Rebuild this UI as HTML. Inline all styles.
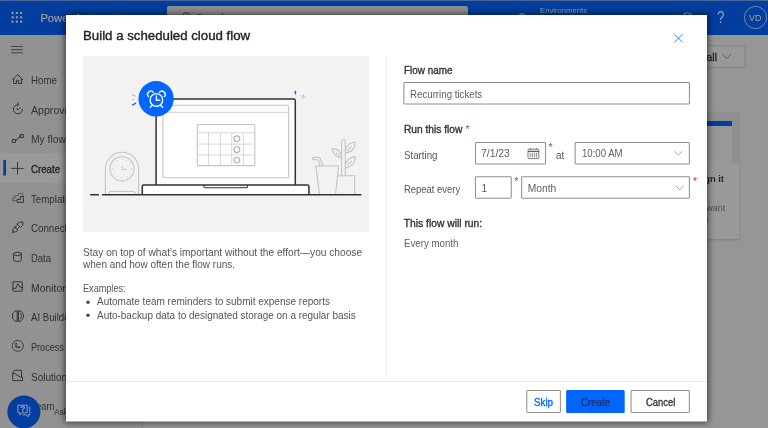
<!DOCTYPE html>
<html lang="en">
<head>
<meta charset="utf-8">
<title>Build a scheduled cloud flow</title>
<style>
*{box-sizing:border-box;margin:0;padding:0}
html,body{width:768px;height:428px;overflow:hidden}
body{position:relative;background:#969696;font-family:"Liberation Sans",sans-serif;color:#323130;font-size:10px}
.abs{position:absolute}
.t{position:absolute;white-space:pre;transform-origin:0 50%}
svg{position:absolute;left:0;top:0;overflow:visible}
#root{position:absolute;left:0;top:0;width:768px;height:428px;will-change:transform}
#dialog{left:66.1px;top:15.3px;width:641px;height:406.1px;background:#fff;box-shadow:0 0 7px 1px rgba(0,0,0,.58),0 2px 6px rgba(0,0,0,.12)}
</style>
</head>
<body>
<div id="root">

<div class="abs" style="left:0;top:0;width:768px;height:34.6px;background:#033d9e;border-top:1px solid #4a6498"></div>
<div class="abs" style="left:0;top:34.6px;width:142.6px;height:394px;background:#929292"></div>
<div class="abs" style="left:142px;top:34.6px;width:1px;height:394px;background:#878787"></div>
<div class="abs" style="left:0;top:153.4px;width:142.6px;height:29.6px;background:#999"></div>
<div class="abs" style="left:166.8px;top:5.8px;width:301px;height:22.6px;background:#8f8f8f;border-radius:2px"></div>
<div class="abs" style="left:560px;top:111.5px;width:179.4px;height:127.5px;background:#999;box-shadow:0 1px 2px rgba(0,0,0,.18)"></div>
<div class="abs" style="left:560px;top:111.5px;width:179.4px;height:51.4px;background:#8f8f8f"></div>
<div class="abs" style="left:560px;top:121px;width:172.1px;height:41.9px;background:#989898"></div>
<div class="abs" style="left:560px;top:121px;width:172.1px;height:4.8px;background:#033d9e"></div>
<svg width="768" height="428" viewBox="0 0 768 428" fill="none">
<rect x="11.60" y="11.90" width="2" height="2" fill="#a3a3a3"/><rect x="15.85" y="11.90" width="2" height="2" fill="#a3a3a3"/><rect x="20.10" y="11.90" width="2" height="2" fill="#a3a3a3"/><rect x="11.60" y="16.30" width="2" height="2" fill="#a3a3a3"/><rect x="15.85" y="16.30" width="2" height="2" fill="#a3a3a3"/><rect x="20.10" y="16.30" width="2" height="2" fill="#a3a3a3"/><rect x="11.60" y="20.70" width="2" height="2" fill="#a3a3a3"/><rect x="15.85" y="20.70" width="2" height="2" fill="#a3a3a3"/><rect x="20.10" y="20.70" width="2" height="2" fill="#a3a3a3"/>
<path d="M11.1 46.5 H22.9 M11.1 49.7 H22.9 M11.1 52.8 H22.9" stroke="#3a3a3a" stroke-width="0.9"/>
<g stroke="#3a3a3a" stroke-width="1"><circle cx="186.2" cy="15.8" r="3.2"/><path d="M183.9 18.1 L181.2 20.8"/></g>
<g stroke="#9a9a9a" stroke-width="0.9"><circle cx="522" cy="18.6" r="5"/><ellipse cx="522" cy="18.6" rx="2.2" ry="5"/></g>
<g stroke="#a0a0a0" stroke-width="1"><path d="M687.5 12.2 L688.7 13.8 L690.9 13.2 L691.3 15.3 L693.3 16.2 L692.3 18 L693.3 19.8 L691.3 20.7 L690.9 22.8 L688.7 22.2 L687.5 23.8 L686.3 22.2 L684.1 22.8 L683.7 20.7 L681.7 19.8 L682.7 18 L681.7 16.2 L683.7 15.3 L684.1 13.2 L686.3 13.8 Z"/></g>
<circle cx="755.5" cy="17.5" r="11.1" stroke="#a0a0a0" stroke-width="0.75"/>
<rect x="3.3" y="159.7" width="2.7" height="16" rx="1.3" fill="#033d9e"/>
<rect x="640" y="45.9" width="105.2" height="21.8" rx="1.5" fill="#989898" stroke="#808080" stroke-width="1"/>
<path d="M722.7 54.5 L726.65 58.6 L730.6 54.5" stroke="#4f4f4f" stroke-width="0.8"/>
<g stroke="#2f2f2f" stroke-width="0.95" stroke-linejoin="round" stroke-linecap="round">
<path d="M12.7 79.6 L17.6 74.6 L22.6 79.6 M13.7 78.9 V83.5 H16.6 V80.3 H18.7 V83.5 H21.6 V78.9"/>
<path d="M18 104.6 A4.6 4.6 0 1 0 22.6 109.2"/><path d="M17.3 103 L19 104.6 L17.3 106.2"/><path d="M16.6 108.8 L18 109.9 L20.3 107.6"/>
<rect x="12.6" y="139.5" width="2.9" height="2.9"/><rect x="20.5" y="134.6" width="2.9" height="2.9"/><path d="M15.5 140.9 C18 140.9 18 136 20.5 136"/>
<path d="M17.5 162.6 V174.2 M11.7 168.4 H23.3" stroke-width="0.9"/>
<path d="M17.4 199.5 H20.3 V196.5 H23.4 V202.4 H17.4 Z"/><path d="M17.2 200.6 H12.4 V198.1 H15 V195.8 H18.2 V193.4 H22.7 V196.3" stroke="#555"/>
<path d="M12.9 232 L12 232.9"/><path d="M15 226.9 L17.6 230.1 Q16.4 232.9 12.9 232 Q11.9 228.6 15 226.9 Z"/><path d="M16.6 226.2 L15.8 227 M18.4 228 L17.6 228.8"/><path d="M17.1 224.2 L20.5 227.5 Q23.6 226 23 222 Q19 221.2 17.1 224.2 Z"/>
<path d="M13.5 254 Q13.5 252.2 17.4 252.2 Q21.3 252.2 21.3 254 V259.8 Q21.3 261.6 17.4 261.6 Q13.5 261.6 13.5 259.8 Z"/><path d="M13.5 254 Q13.5 255.6 17.4 255.6 Q21.3 255.6 21.3 254"/>
<rect x="12.9" y="281.8" width="9.4" height="9.4" rx="0.5"/><path d="M12.9 288.3 H15.8 L17.9 283.8 L20.4 287.6 H22.3"/>
<path d="M16.8 310.7 Q14.4 310.3 13.7 312.5 Q11.9 313.6 12.6 316 Q11.8 318.4 13.6 319.7 Q14.4 321.9 16.8 321.5 Z"/><path d="M18.8 310.7 Q21.2 310.3 21.9 312.5 Q23.4 313.2 23.1 315 L23.8 316 L23.1 317.2 Q23.4 318.8 21.9 319.7 Q21.2 321.9 18.8 321.5 Z"/><path d="M20.2 313.2 Q22 313.8 21.6 315.4 M20.4 318.6 Q20 316.8 21.8 316.6" stroke-width="0.8"/>
<circle cx="17.8" cy="345.9" r="5.5" stroke-width="0.8" stroke-dasharray="7.6 1.04" stroke-dashoffset="-0.5"/><path d="M16 343.8 V347.2 H18.8" stroke-width="1.1"/><circle cx="16" cy="343.6" r="0.8" fill="#2f2f2f" stroke="none"/><circle cx="19.2" cy="347.2" r="0.95" fill="#2f2f2f" stroke="none"/>
<path d="M12.8 373.5 V380.6 H22.5 V377.1 H21.5 V370.3 H14.3 L12.8 373.5 Z"/><path d="M12.8 373.5 H14.6 L20.3 377.1 H21.5"/>
</g>
</svg>

<div class="t" style="left:40.40px;top:10.92px;font-size:11.2px;line-height:14.6px;color:#a0a0a0;-webkit-text-stroke:0.15px #a0a0a0;">Power Automate</div>
<div class="t" style="left:196.00px;top:11.05px;font-size:9.8px;line-height:12.7px;color:#3c3c3c;">Search</div>
<div class="t" style="left:539.80px;top:5.53px;font-size:8px;line-height:10.4px;color:#8ea3c9;transform:scaleX(0.9609);">Environments</div>
<div class="t" style="left:539.80px;top:14.85px;font-size:9.8px;line-height:12.7px;color:#a0a0a0;">Contoso (default)</div>
<div class="t" style="left:717.20px;top:7.74px;font-size:15.9px;line-height:20.7px;color:#8fa0c8;transform:scaleX(0.8367);">?</div>
<div class="t" style="left:749.20px;top:12.65px;font-size:9.1px;line-height:11.8px;color:#a6a6a6;transform:scaleX(0.9729);">VD</div>
<div class="t" style="left:31.10px;top:73.95px;font-size:10.4px;line-height:13.5px;color:#303030;transform:scaleX(0.935);">Home</div>
<div class="t" style="left:31.10px;top:103.61px;font-size:10.4px;line-height:13.5px;color:#303030;transform:scaleX(1.020);">Approvals</div>
<div class="t" style="left:31.10px;top:133.27px;font-size:10.4px;line-height:13.5px;color:#303030;transform:scaleX(0.990);">My flows</div>
<div class="t" style="left:31.10px;top:162.93px;font-size:10.4px;line-height:13.5px;color:#1f1f1f;-webkit-text-stroke:0.3px #1f1f1f;transform:scaleX(0.930);">Create</div>
<div class="t" style="left:31.10px;top:192.59px;font-size:10.4px;line-height:13.5px;color:#303030;transform:scaleX(0.935);">Templates</div>
<div class="t" style="left:31.10px;top:222.25px;font-size:10.4px;line-height:13.5px;color:#303030;transform:scaleX(0.935);">Connectors</div>
<div class="t" style="left:31.10px;top:251.91px;font-size:10.4px;line-height:13.5px;color:#303030;transform:scaleX(0.910);">Data</div>
<div class="t" style="left:31.10px;top:281.57px;font-size:10.4px;line-height:13.5px;color:#303030;transform:scaleX(1.000);">Monitor</div>
<div class="t" style="left:31.10px;top:311.23px;font-size:10.4px;line-height:13.5px;color:#303030;transform:scaleX(0.926);">AI Builder</div>
<div class="t" style="left:31.10px;top:340.89px;font-size:10.4px;line-height:13.5px;color:#303030;transform:scaleX(0.875);">Process mining</div>
<div class="t" style="left:31.10px;top:370.55px;font-size:10.4px;line-height:13.5px;color:#303030;transform:scaleX(0.960);">Solutions</div>
<div class="t" style="left:31.10px;top:400.21px;font-size:10.4px;line-height:13.5px;color:#303030;transform:scaleX(0.890);">Learn</div>
<div class="t" style="left:54.20px;top:407.32px;font-size:8.3px;line-height:10.8px;color:#303030;">Ask a chatbot</div>
<svg width="768" height="428" viewBox="0 0 768 428" fill="none">
<circle cx="23.9" cy="411.9" r="16.5" fill="#033d9e"/>
<g stroke="#9aa9c8" stroke-width="0.9" stroke-linejoin="round"><path d="M17.9 405.2 H27.2 V412.8 H22 L20 415.2 V412.8 H17.9 Z"/><path d="M28.6 407.2 H29.8 V414.8 H28.2 V416.8 L26 414.8 H22.6"/></g>
</svg>

<div class="t" style="left:20.30px;top:403.64px;font-size:8.4px;line-height:10.9px;color:#9aa9c8;font-weight:bold;">?</div>
<div class="t" style="left:674.80px;top:50.42px;font-size:10.9px;line-height:14.2px;color:#262626;-webkit-text-stroke:0.3px #262626;">Install all</div>
<div class="t" style="left:667.00px;top:172.64px;font-size:9.7px;line-height:12.6px;color:#262626;font-weight:bold;transform:scaleX(0.9614);">and assign it</div>
<div class="t" style="left:663.00px;top:213.63px;font-size:9px;line-height:11.7px;color:#0a3f96;transform:scaleX(0.9908);">Learn more</div>
<div class="t" style="left:689.20px;top:202.53px;font-size:9px;line-height:11.7px;color:#4f4f4f;">you want</div>
<div id="dialog" class="abs"></div>
<div class="abs" style="left:66px;top:421px;width:641px;height:1px;background:rgba(255,255,255,.5)"></div>
<div class="t" style="left:82.60px;top:26.84px;font-size:13.6px;line-height:17.7px;color:#262524;-webkit-text-stroke:0.4px #262524;transform:scaleX(0.9742);">Build a scheduled cloud flow</div>
<div class="abs" style="left:83.1px;top:56px;width:286px;height:175.6px;background:#f3f2f1"></div>
<svg style="left:83px;top:56px" width="286" height="175.6" viewBox="83 56 286 175.6" fill="none">
<g stroke="#333231" stroke-width="1.5">

<rect x="156.1" y="99.1" width="139.2" height="87" rx="1.6" fill="#fff"/>
<path d="M142.3 194.7 V186.5 Q142.3 185 143.8 185 H307.4 Q308.9 185 308.9 186.5 V194.7" fill="#fff"/>
<path d="M203.8 185 V186.2 Q203.8 187.7 205.3 187.7 H246.1 Q247.6 187.7 247.6 186.2 V185" stroke-width="1.1"/>
</g>
<g stroke="#c6c4c2" stroke-width="1.12">
<rect x="162.9" y="105.2" width="125.8" height="72.5" rx="1.2"/>
<path d="M163 112.4 H288.6" stroke="#dddbd9"/>
<rect x="197.3" y="124.5" width="57.5" height="41.1" rx="1" />
<path d="M197.3 132.8 H254.8 M197.3 144.1 H254.8 M197.3 154.9 H254.8" stroke="#d2d0ce" stroke-width="0.85"/>
<path d="M208.6 132.8 V165.6 M220.4 132.8 V165.6 M231.7 132.8 V165.6 M243.3 132.8 V165.6" stroke="#d2d0ce" stroke-width="0.85"/>
<circle cx="236.9" cy="138.8" r="2.9" fill="#fff" stroke="#b3b0ad"/>
<circle cx="236.9" cy="149.7" r="2.9" fill="#fff" stroke="#b3b0ad"/>
<circle cx="236.9" cy="160.1" r="2.9" fill="#fff" stroke="#b3b0ad"/>
</g>
<!-- desk clock -->
<g stroke="#c6c4c2" stroke-width="1.12">
<path d="M105.4 193.9 V168.8 A16.6 16.6 0 0 1 138.6 168.8 V193.9"/>
<circle cx="122" cy="168.8" r="12.1"/>
<path d="M109.2 193.9 V192.6 Q109.2 191.5 110.3 191.5 H133.7 Q134.8 191.5 134.8 192.6 V193.9"/>
<path d="M122 166 V169.4 H126.6" stroke-width="0.9"/>
<g stroke="#d0cecc" stroke-width="0.9" stroke-linecap="round">
<path d="M122 159 V159.6 M122 178 V178.6 M112.2 168.8 H112.8 M131.2 168.8 H131.8 M127 160.4 L126.7 160.9 M117 160.4 L117.3 160.9 M130.4 163.8 L129.9 164.1 M113.6 163.8 L114.1 164.1 M130.4 173.8 L129.9 173.5 M113.6 173.8 L114.1 173.5 M127 177.2 L126.7 176.7 M117 177.2 L117.3 176.7"/>
</g>
</g>
<!-- cup and plant -->
<g stroke="#c6c4c2" stroke-width="1.12" stroke-linejoin="round">
<path d="M319.5 193.9 L315.8 166 H338.6 L335.6 193.9"/>
<path d="M323 166 L320.2 158.6 Q319.8 157.4 318.6 157.4 H313.6 Q312.2 157.4 312.4 158.6 Q312.6 159.8 313.8 159.8 H317.2 Q318 159.8 318.3 160.6 L320.4 166"/>
<path d="M337.6 175.7 H354.7 V193.9"/>
<path d="M341.7 175.7 V141.2 Q341.7 139.3 343.5 139.3 Q345.3 139.3 345.3 141.2 V175.7"/>
<path d="M341.7 157.6 Q334 157.4 332 148.6 Q340 148.4 341.7 156.4"/>
<path d="M345.3 152 Q346 143.4 355 142 Q356 151 345.3 153.4"/>
<path d="M345.3 166.4 Q346 158 355 156.6 Q356 165.6 345.3 167.8"/>
<path d="M336 153 L340 156 M351.6 146.4 L347.6 150.6 M351.6 161 L347.6 165"/>
</g>
<path d="M90.2 194.7 H98.9 M102 194.7 H361.4" stroke="#333231" stroke-width="1.45"/>
<!-- sparkles -->
<path d="M295.4 91.4 V93.8" stroke="#0066ff" stroke-width="1.5" stroke-linecap="round"/>
<path d="M300.3 95.8 L305.8 97.4 M303.7 94 L302.5 99.1" stroke="#c6c4c2" stroke-width="0.9"/>
<path d="M132 94.5 L135.9 96.2 M132 99.4 L134.2 99.9" stroke="#c2c0be" stroke-width="1.1"/>
<path d="M132.2 105.1 L136.2 103" stroke="#0066ff" stroke-width="1.4"/>
<!-- alarm badge -->
<circle cx="156.1" cy="98.8" r="17.7" fill="#0066ff"/>
<g stroke="#fff" stroke-width="1.35" stroke-linecap="round" stroke-linejoin="round">
<circle cx="156.4" cy="100" r="6.3"/>
<path d="M156.4 96 V100.3 H159.8"/>
<path d="M148.5 96.6 A3.1 3.1 0 0 1 153.4 92.2"/>
<path d="M164.3 96.6 A3.1 3.1 0 0 0 159.4 92.2"/>
<path d="M152.2 105.2 L150.2 107.3 M160.6 105.2 L162.6 107.3"/>
</g>
</svg>
<div class="abs" style="left:386.4px;top:56px;width:1px;height:320px;background:#edebe9"></div>
<div class="abs" style="left:66.1px;top:380.8px;width:641px;height:1px;background:#edebe9"></div>
<div class="t" style="left:83.00px;top:245.65px;font-size:10.4px;line-height:13.5px;color:#575553;transform:scaleX(0.9778);">Stay on top of what&#x27;s important without the effort—you choose</div>
<div class="t" style="left:83.00px;top:258.25px;font-size:10.4px;line-height:13.5px;color:#575553;transform:scaleX(0.9649);">when and how often the flow runs.</div>
<div class="t" style="left:83.20px;top:282.05px;font-size:10.4px;line-height:13.5px;color:#575553;transform:scaleX(0.8774);">Examples:</div>
<div class="t" style="left:97.30px;top:295.25px;font-size:10.4px;line-height:13.5px;color:#575553;transform:scaleX(0.9628);">Automate team reminders to submit expense reports</div>
<div class="t" style="left:97.30px;top:308.55px;font-size:10.4px;line-height:13.5px;color:#575553;transform:scaleX(0.9592);">Auto-backup data to designated storage on a regular basis</div>
<svg width="768" height="428" viewBox="0 0 768 428" fill="#fff" stroke="#939190" stroke-width="1.05">
<rect x="403.85" y="82.55" width="285.60" height="21.50" rx="0.9"/>
<rect x="475.45" y="142.55" width="70.10" height="21.50" rx="0.9"/>
<rect x="575.15" y="142.55" width="114.20" height="21.50" rx="0.9"/>
<rect x="475.45" y="176.65" width="35.80" height="21.50" rx="0.9"/>
<rect x="521.65" y="176.65" width="167.70" height="21.50" rx="0.9"/>
<rect x="526.8" y="390.45" width="33.6" height="22" rx="0.9"/>
<rect x="566.1" y="389.9" width="58.6" height="23.1" rx="1.5" fill="#0066ff" stroke="none"/>
<rect x="631.05" y="390.45" width="58.3" height="22" rx="0.9"/>
<path d="M674.3 151.1 L678.3 155 L682.3 151.1" fill="none" stroke-width="0.85"/>
<path d="M675.8 185.8 L679.8 189.7 L683.8 185.8" fill="none" stroke-width="0.85"/>
<path d="M674.4 34.1 L682.6 42.3 M682.6 34.1 L674.4 42.3" stroke="#3b86ff" stroke-width="1" fill="none"/>
<circle cx="88" cy="302.2" r="1.7" fill="#4a4846" stroke="none"/><circle cx="88" cy="315.3" r="1.7" fill="#4a4846" stroke="none"/>
<g transform="translate(527.4 147.8)" fill="none" stroke="#605e5c" stroke-width="0.8"><rect x="0.6" y="1.4" width="10.8" height="9.4" rx="0.6"/><path d="M0.6 3.6 H11.4" stroke-width="1.2"/><path d="M3.1 0.2 V2 M8.9 0.2 V2"/><path d="M2.9 5 V9.6 M5 5 V9.6 M7.1 5 V9.6 M9.2 5 V9.6" stroke="#797775" stroke-width="0.9"/><path d="M1.6 6.4 H10.4 M1.6 8.3 H10.4" stroke="#c8c6c4" stroke-width="0.5"/></g>
</svg>

<div class="t" style="left:403.80px;top:64.03px;font-size:10.3px;line-height:13.4px;color:#323130;-webkit-text-stroke:0.32px #323130;transform:scaleX(0.9608);">Flow name</div>
<div class="t" style="left:410.10px;top:87.63px;font-size:10.3px;line-height:13.4px;color:#605e5c;transform:scaleX(0.9413);">Recurring tickets</div>
<div class="t" style="left:403.80px;top:123.23px;font-size:10.3px;line-height:13.4px;color:#323130;-webkit-text-stroke:0.32px #323130;transform:scaleX(0.9904);">Run this flow</div>
<div class="t" style="left:465.50px;top:122.91px;font-size:10.5px;line-height:13.7px;color:#b5444a;">*</div>
<div class="t" style="left:403.80px;top:148.83px;font-size:10.3px;line-height:13.4px;color:#575553;transform:scaleX(0.9437);">Starting</div>
<div class="t" style="left:481.30px;top:147.33px;font-size:10.3px;line-height:13.4px;color:#605e5c;transform:scaleX(1.0092);">7/1/23</div>
<div class="t" style="left:548.60px;top:141.01px;font-size:10.5px;line-height:13.7px;color:#b5444a;">*</div>
<div class="t" style="left:555.80px;top:148.83px;font-size:10.3px;line-height:13.4px;color:#575553;transform:scaleX(0.9662);">at</div>
<div class="t" style="left:581.60px;top:147.33px;font-size:10.3px;line-height:13.4px;color:#605e5c;transform:scaleX(0.9329);">10:00 AM</div>
<div class="t" style="left:403.80px;top:183.03px;font-size:10.3px;line-height:13.4px;color:#575553;transform:scaleX(0.9174);">Repeat every</div>
<div class="t" style="left:481.60px;top:182.03px;font-size:10.3px;line-height:13.4px;color:#605e5c;">1</div>
<div class="t" style="left:514.30px;top:174.91px;font-size:10.5px;line-height:13.7px;color:#b5444a;">*</div>
<div class="t" style="left:527.70px;top:181.63px;font-size:10.3px;line-height:13.4px;color:#605e5c;">Month</div>
<div class="t" style="left:692.90px;top:174.61px;font-size:10.5px;line-height:13.7px;color:#b5444a;">*</div>
<div class="t" style="left:403.80px;top:217.33px;font-size:10.3px;line-height:13.4px;color:#323130;-webkit-text-stroke:0.32px #323130;">This flow will run:</div>
<div class="t" style="left:403.80px;top:236.83px;font-size:10.3px;line-height:13.4px;color:#605e5c;transform:scaleX(0.9409);">Every month</div>
<div class="t" style="left:533.70px;top:396.03px;font-size:10.3px;line-height:13.4px;color:#0f6cff;-webkit-text-stroke:0.4px #0f6cff;transform:scaleX(0.9482);">Skip</div>
<div class="t" style="left:580.90px;top:396.03px;font-size:10.3px;line-height:13.4px;color:#1e2d5e;-webkit-text-stroke:0.25px #1e2d5e;transform:scaleX(0.9380);">Create</div>
<div class="t" style="left:645.60px;top:396.03px;font-size:10.3px;line-height:13.4px;color:#323130;-webkit-text-stroke:0.3px #323130;transform:scaleX(0.9170);">Cancel</div>
</div>
</body>
</html>
